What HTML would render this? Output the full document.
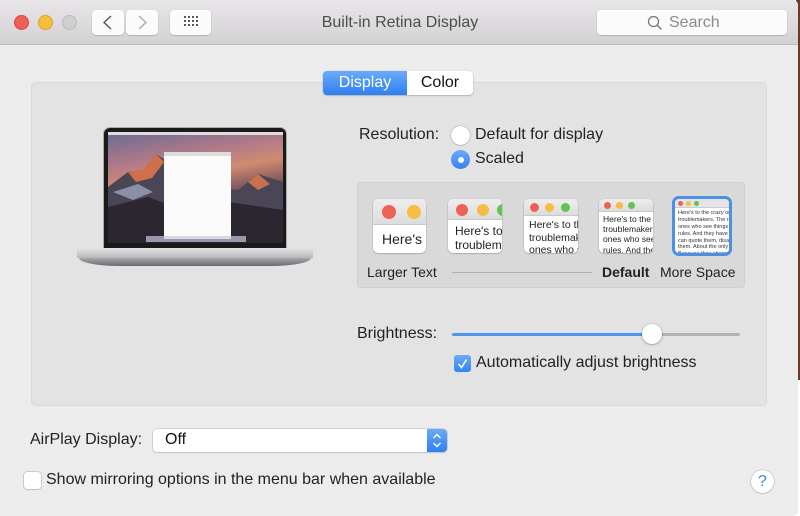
<!DOCTYPE html>
<html><head><meta charset="utf-8">
<style>
*{margin:0;padding:0;box-sizing:border-box}
body{width:800px;height:516px;overflow:hidden;position:relative;background:#fff;font-family:"Liberation Sans",sans-serif;color:#222;font-size:14px}
.a{position:absolute}
#win{left:0;top:0;width:798px;height:516px;background:#ececec;border-radius:0 5px 5px 0;overflow:hidden}
#tb{left:0;top:0;width:798px;height:45px;background:linear-gradient(#e8e6e8,#d3d1d3);border-bottom:1px solid #bcbbbc}
.dot{width:15px;height:15px;border-radius:50%;top:15px}
.btn{background:#fbfbfb;border-radius:4px;box-shadow:0 0.5px 1px rgba(0,0,0,.3)}
.lbl{font-size:16px;white-space:nowrap}
.th{background:#fff;border-radius:5px;overflow:hidden;box-shadow:0 0.5px 1.5px rgba(0,0,0,.35)}
.th .h{background:linear-gradient(#eee,#dcdcdc);border-bottom:1px solid #c8c8c8;position:relative}
.th .h i{position:absolute;border-radius:50%;display:block}
.th p{white-space:nowrap;color:#222;line-height:1.2}
</style></head><body>
<div class="a" style="left:796px;top:0;width:4px;height:380px;background:#6a3a24"></div>
<div id="win" class="a">
 <div id="tb" class="a">
  <div class="a dot" style="left:14px;background:#ee5f57;border:0.5px solid #d6483f"></div>
  <div class="a dot" style="left:38px;background:#f6be3c;border:0.5px solid #dea130"></div>
  <div class="a dot" style="left:62px;background:#d0cfd0;border:0.5px solid #bbb"></div>
  <div class="a btn" style="left:92px;top:10px;width:32px;height:25px"></div>
  <div class="a btn" style="left:126px;top:10px;width:32px;height:25px"></div>
  <svg class="a" style="left:92px;top:10px" width="66" height="25"><path d="M19 6 L12 12.5 L19 19" fill="none" stroke="#555" stroke-width="1.4"/><path d="M47 6 L54 12.5 L47 19" fill="none" stroke="#aaa" stroke-width="1.4"/></svg>
  <div class="a btn" style="left:170px;top:10px;width:41px;height:25px"></div>
  <svg class="a" style="left:184px;top:16px" width="16" height="14"><g fill="#555"><rect x="0" y="0" width="2" height="2"/><rect x="4" y="0" width="2" height="2"/><rect x="8" y="0" width="2" height="2"/><rect x="12" y="0" width="2" height="2"/><rect x="0" y="4" width="2" height="2"/><rect x="4" y="4" width="2" height="2"/><rect x="8" y="4" width="2" height="2"/><rect x="12" y="4" width="2" height="2"/><rect x="0" y="8" width="2" height="2"/><rect x="4" y="8" width="2" height="2"/><rect x="8" y="8" width="2" height="2"/><rect x="12" y="8" width="2" height="2"/></g></svg>
  <div class="a" style="left:290px;top:14px;width:220px;text-align:center;font-size:16px;color:#4d4d4d">Built-in Retina Display</div>
  <div class="a btn" style="left:597px;top:10px;width:190px;height:25px"></div>
  <svg class="a" style="left:647px;top:15px" width="16" height="16"><circle cx="6.5" cy="6.5" r="5" fill="none" stroke="#777" stroke-width="1.3"/><path d="M10 10 L14.5 14.5" stroke="#777" stroke-width="1.4"/></svg>
  <div class="a" style="left:669px;top:14px;font-size:16px;color:#8a8a8a">Search</div>
 </div>

 <div class="a" style="left:31px;top:82px;width:736px;height:324px;background:#e3e3e3;border-radius:5px;border:1px solid #dadada"></div>
 <div class="a" style="left:323px;top:71px;width:150px;height:24px;border-radius:4px;background:#fff;box-shadow:0 0.5px 1.5px rgba(0,0,0,.35);overflow:hidden">
  <div class="a" style="left:0;top:0;width:84px;height:24px;background:linear-gradient(#6aaaf8,#2f7ff0);color:#fff;font-size:16px;text-align:center;line-height:24px">Display</div>
  <div class="a" style="left:84px;top:0;width:66px;height:24px;color:#111;font-size:16px;text-align:center;line-height:24px">Color</div>
 </div>

 <!-- laptop -->
 <div class="a" style="left:103px;top:127px;width:184px;height:122px;background:#1a1a1a;border-radius:7px 7px 0 0;border:1px solid #aaa"></div>
 <div class="a" style="left:108px;top:132px;width:175px;height:111px;background:linear-gradient(170deg,#6a6a94 0%,#b07a88 25%,#d08a70 40%,#6a4a5a 60%,#2a2430 100%);overflow:hidden">
  <svg class="a" style="left:0;top:0" width="175" height="111"><path d="M0 55 L20 40 L35 38 L48 22 L60 30 L75 45 L100 55 L130 58 L150 42 L175 50 L175 111 L0 111Z" fill="#4a4656"/><path d="M0 75 L40 65 L80 80 L120 70 L175 78 L175 111 L0 111Z" fill="#2c2630"/><path d="M20 40 L35 38 L48 22 L56 30 L44 46 L28 50Z" fill="#d0704a"/><path d="M140 50 L150 42 L162 52 L150 58Z" fill="#c87050"/><path d="M5 60 L30 52 L45 60 L25 68Z" fill="#8a90a8"/></svg>
  <div class="a" style="left:0;top:0;width:175px;height:3px;background:#ddd"></div>
  <div class="a" style="left:56px;top:20px;width:67px;height:87px;background:#fafafa;border-top:4px solid #ddd"></div>
  <div class="a" style="left:38px;top:104px;width:100px;height:6px;background:rgba(200,200,220,.7)"></div>
 </div>
 <div class="a" style="left:77px;top:248px;width:236px;height:10px;background:linear-gradient(#e4e4e6,#b8b8bc);border-radius:2px 2px 0 0"></div>
 <div class="a" style="left:79px;top:258px;width:232px;height:8px;background:linear-gradient(#a8a8ac,#6a6a6e);border-radius:0 0 40px 40px/0 0 8px 8px"></div>

 <div class="a lbl" style="left:359px;top:126px">Resolution:</div>
 <div class="a" style="left:451px;top:126px;width:19px;height:19px;border-radius:50%;background:#fff;box-shadow:0 0 0 0.5px #aaa,0 0.5px 1px rgba(0,0,0,.3)"></div>
 <div class="a lbl" style="left:475px;top:126px">Default for display</div>
 <div class="a" style="left:451px;top:150px;width:19px;height:19px;border-radius:50%;background:linear-gradient(#6aaaf8,#3582f0)"></div>
 <div class="a" style="left:457.5px;top:156.5px;width:6px;height:6px;border-radius:50%;background:#fff"></div>
 <div class="a lbl" style="left:475px;top:150px">Scaled</div>

 <div class="a" style="left:357px;top:182px;width:388px;height:106px;background:#d9d9d9;border-radius:4px;border:1px solid #d0d0d0"></div>
 <div class="a th" style="left:373px;top:199px;width:53px;height:54px"><div class="h" style="height:26px"><i style="left:9px;top:6px;width:14px;height:14px;background:#ee6157"></i><i style="left:34px;top:6px;width:14px;height:14px;background:#f6bd42"></i></div><p style="font-size:14px;padding:6px 0 0 9px">Here's</p></div>
 <div class="a th" style="left:448px;top:199px;width:54px;height:54px"><div class="h" style="height:21px"><i style="left:8px;top:5px;width:12px;height:12px;background:#ee6157"></i><i style="left:29px;top:5px;width:12px;height:12px;background:#f6bd42"></i><i style="left:49px;top:5px;width:12px;height:12px;background:#5fc452"></i></div><p style="font-size:12px;padding:4px 0 0 7px">Here's to<br>troublem</p></div>
 <div class="a th" style="left:524px;top:199px;width:54px;height:54px"><div class="h" style="height:17px"><i style="left:6px;top:4px;width:9px;height:9px;background:#ee6157"></i><i style="left:21px;top:4px;width:9px;height:9px;background:#f6bd42"></i><i style="left:37px;top:4px;width:9px;height:9px;background:#5fc452"></i></div><p style="font-size:10.5px;padding:3px 0 0 5px">Here's to th<br>troublemak<br>ones who s</p></div>
 <div class="a th" style="left:599px;top:199px;width:54px;height:54px"><div class="h" style="height:13px"><i style="left:5px;top:3px;width:7px;height:7px;background:#ee6157"></i><i style="left:17px;top:3px;width:7px;height:7px;background:#f6bd42"></i><i style="left:29px;top:3px;width:7px;height:7px;background:#5fc452"></i></div><p style="font-size:8.5px;padding:2px 0 0 4px">Here's to the cr<br>troublemakers.<br>ones who see t<br>rules. And they</p></div>
 <div class="a" style="left:672px;top:196px;width:60px;height:60px;border-radius:7px;border:3px solid #4b8fe8;background:#fff;overflow:hidden">
  <div style="height:9px;background:#e4e4e4;border-bottom:1px solid #ccc;position:relative"><i style="position:absolute;left:3px;top:2px;width:5px;height:5px;border-radius:50%;background:#ee6157"></i><i style="position:absolute;left:11px;top:2px;width:5px;height:5px;border-radius:50%;background:#f6bd42"></i><i style="position:absolute;left:19px;top:2px;width:5px;height:5px;border-radius:50%;background:#5fc452"></i></div>
  <p style="font-size:5.5px;line-height:1.25;padding:2px 0 0 3px;white-space:nowrap;color:#333">Here's to the crazy ones<br>troublemakers. The rou<br>ones who see things di<br>rules. And they have no<br>can quote them, disagr<br>them. About the only th<br>Because they change t</p>
 </div>
 <div class="a" style="left:367px;top:264px;font-size:14px;white-space:nowrap">Larger Text</div>
 <div class="a" style="left:452px;top:272px;width:140px;height:1px;background:#b0b0b0"></div>
 <div class="a" style="left:602px;top:264px;font-size:14px;font-weight:bold;white-space:nowrap">Default</div>
 <div class="a" style="left:660px;top:264px;font-size:14px;white-space:nowrap">More Space</div>

 <div class="a lbl" style="left:357px;top:325px">Brightness:</div>
 <div class="a" style="left:452px;top:333px;width:200px;height:3px;background:#4f95f0;border-radius:2px"></div>
 <div class="a" style="left:652px;top:333px;width:88px;height:3px;background:#b2b2b2;border-radius:2px"></div>
 <div class="a" style="left:642px;top:324px;width:20px;height:20px;border-radius:50%;background:#fff;box-shadow:0 0.5px 2px rgba(0,0,0,.45)"></div>
 <div class="a" style="left:454px;top:355px;width:17px;height:17px;border-radius:3px;background:linear-gradient(#6aaaf8,#3582f0)"></div>
 <svg class="a" style="left:454px;top:355px" width="17" height="17"><path d="M4.5 9 L7.5 12.5 L12.5 4.5" fill="none" stroke="#fff" stroke-width="1.6"/></svg>
 <div class="a lbl" style="left:476px;top:354px">Automatically adjust brightness</div>

 <div class="a lbl" style="left:30px;top:431px">AirPlay Display:</div>
 <div class="a" style="left:153px;top:429px;width:294px;height:23px;background:#fff;border-radius:4px;box-shadow:0 0 0 0.5px #bbb,0 0.5px 1.5px rgba(0,0,0,.3);overflow:hidden">
  <div class="a" style="left:12px;top:2px;font-size:16px;color:#111">Off</div>
  <div class="a" style="left:274px;top:0;width:20px;height:23px;background:linear-gradient(#6aaaf8,#2f7ff0)"></div>
  <svg class="a" style="left:274px;top:0" width="20" height="23"><path d="M6.5 9 L10 5.5 L13.5 9 M6.5 14 L10 17.5 L13.5 14" fill="none" stroke="#fff" stroke-width="1.4"/></svg>
 </div>
 <div class="a" style="left:24px;top:472px;width:17px;height:17px;border-radius:3px;background:#fff;box-shadow:0 0 0 0.5px #aaa,0 0.5px 1px rgba(0,0,0,.3)"></div>
 <div class="a lbl" style="left:46px;top:471px">Show mirroring options in the menu bar when available</div>
 <div class="a" style="left:751px;top:470px;width:23px;height:23px;border-radius:50%;background:#fff;box-shadow:0 0 0 0.5px #bbb,0 0.5px 1.5px rgba(0,0,0,.3);color:#3a80ee;font-size:16px;text-align:center;line-height:23px">?</div>
</div>
</body></html>
